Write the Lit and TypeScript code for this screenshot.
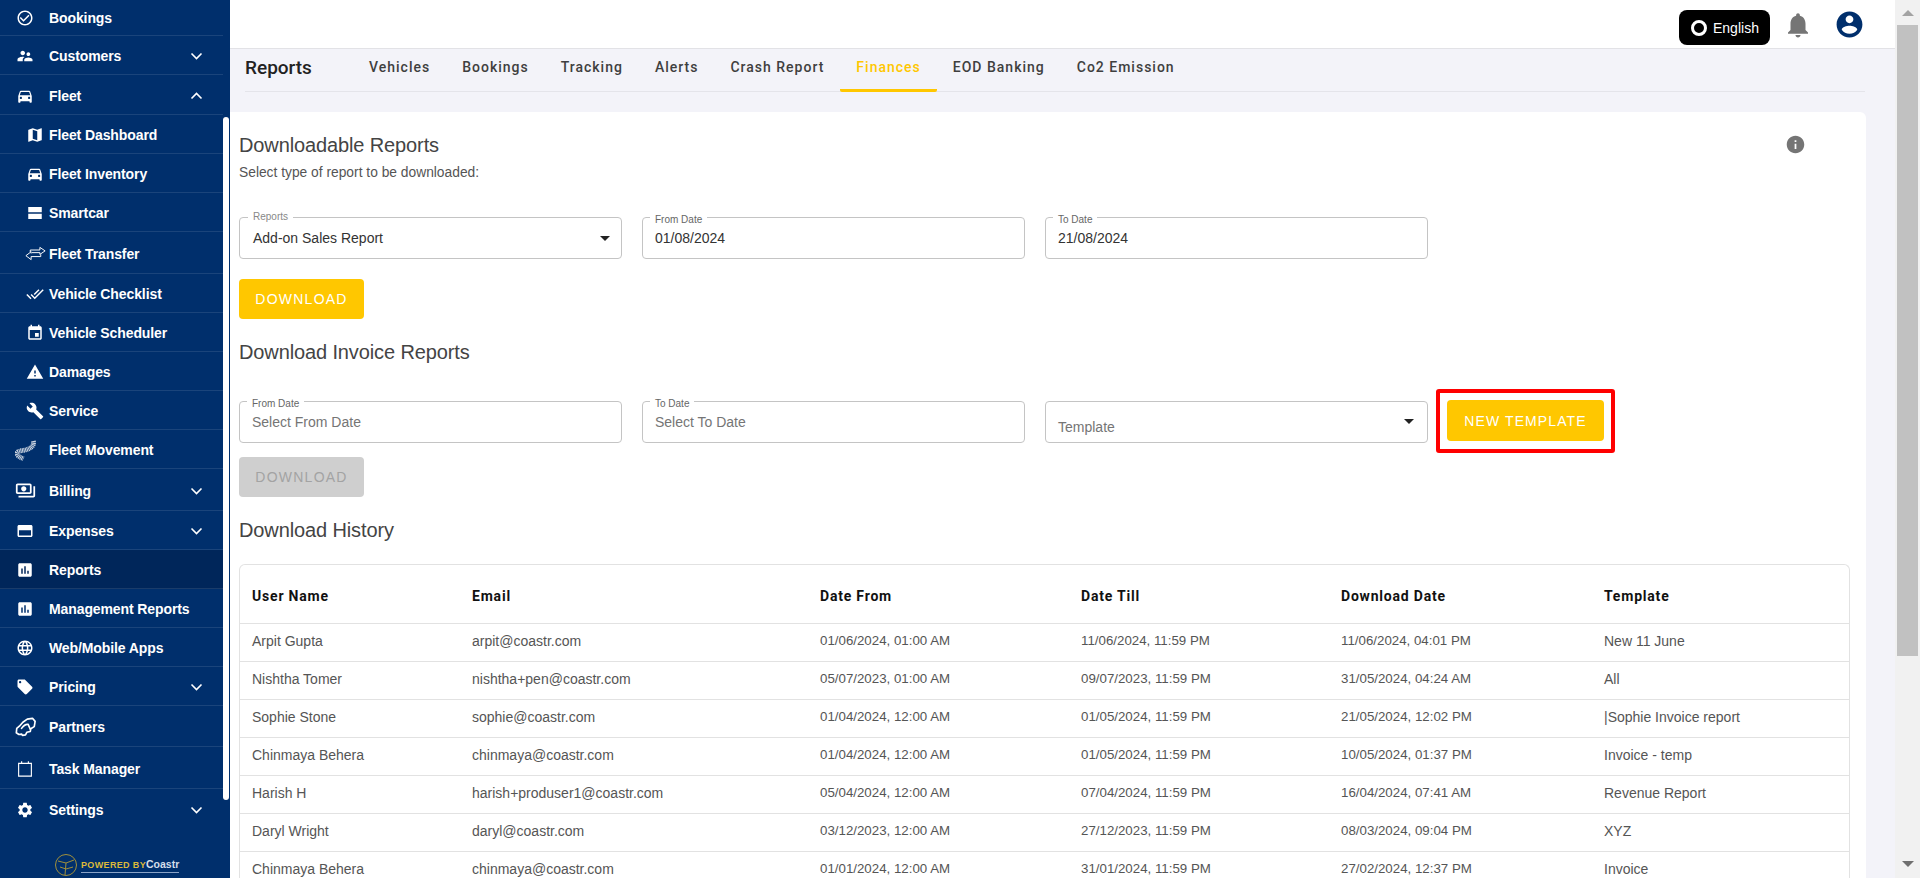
import { LitElement, html, css, svg } from 'lit';
import { customElement } from 'lit/decorators.js';

// material icons, 24 unit box
const p = (d: string) => html`<svg viewBox="0 0 24 24" fill="currentColor"><path d=${d}></path></svg>`;

const icons: Record<string, unknown> = {
  check: p('M16.59 7.58L10 14.17l-3.59-3.58L5 12l5 5 8-8zM12 2C6.48 2 2 6.48 2 12s4.48 10 10 10 10-4.48 10-10S17.52 2 12 2zm0 18c-4.42 0-8-3.58-8-8s3.58-8 8-8 8 3.58 8 8-3.58 8-8 8z'),
  people: p('M16.5 12c1.38 0 2.49-1.12 2.49-2.5S17.88 7 16.5 7C15.12 7 14 8.12 14 9.5s1.12 2.5 2.5 2.5zM9 11c1.66 0 2.99-1.34 2.99-3S10.66 5 9 5C7.34 5 6 6.34 6 8s1.34 3 3 3zm7.5 3c-1.83 0-5.500.92-5.500 2.750V19h11v-2.250c0-1.830-3.670-2.750-5.500-2.750zM9 13c-2.330 0-7 1.170-7 3.500V19h7v-2.250c0-.85.330-2.340 2.370-3.470C10.500 13.100 9.660 13 9 13z'),
  car: p('M18.92 6.01C18.72 5.42 18.16 5 17.5 5h-11c-.66 0-1.21.42-1.42 1.01L3 12v8c0 .55.45 1 1 1h1c.55 0 1-.45 1-1v-1h12v1c0 .55.45 1 1 1h1c.55 0 1-.45 1-1v-8l-2.08-5.99zM6.5 16c-.83 0-1.5-.67-1.5-1.5S5.67 13 6.5 13s1.5.67 1.5 1.5S7.33 16 6.5 16zm11 0c-.83 0-1.5-.67-1.5-1.5s.67-1.5 1.5-1.5 1.5.67 1.5 1.5-.67 1.5-1.5 1.5zM5 11l1.5-4.5h11L19 11H5z'),
  map: p('M20.5 3l-.16.03L15 5.1 9 3 3.36 4.9c-.21.07-.36.25-.36.48V20.5c0 .28.22.5.5.5l.16-.03L9 18.9l6 2.1 5.64-1.9c.21-.07.36-.25.36-.48V3.5c0-.28-.22-.5-.5-.5zM15 19l-6-2.11V5l6 2.11V19z'),
  bars: p('M3 4h18v7H3zM3 13h18v7H3z'),
  transfer: html`<svg viewBox="0 0 24 24" fill="none" stroke="currentColor" stroke-width="1.1"><path d="M6 10.500V8h11V5l6 4-6 4v-2H8"></path><path d="M18 13v2.500H7V19l-6-4.500 6-4.500v2"></path></svg>`,
  doneall: p('M18 7l-1.41-1.41-6.34 6.34 1.41 1.41L18 7zm4.24-1.41L11.66 16.17 7.48 12l-1.41 1.41L11.66 19l12-12-1.42-1.41zM.41 13.41L6 19l1.41-1.41L1.83 12 .41 13.41z'),
  event: p('M17 12h-5v5h5v-5zM16 1v2H8V1H6v2H5c-1.11 0-1.99.9-1.99 2L3 19c0 1.1.89 2 2 2h14c1.1 0 2-.9 2-2V5c0-1.1-.9-2-2-2h-1V1h-2zm3 18H5V8h14v11z'),
  warning: p('M1 21h22L12 2 1 21zm12-3h-2v-2h2v2zm0-4h-2v-4h2v4z'),
  build: p('M22.7 19l-9.1-9.1c.9-2.3.4-5-1.5-6.9-2-2-5-2.4-7.4-1.3L9 6 6 9 1.6 4.7C.4 7.1.9 10.1 2.9 12.1c1.9 1.9 4.6 2.4 6.9 1.5l9.1 9.1c.4.4 1 .4 1.4 0l2.3-2.3c.5-.4.5-1.1.1-1.4z'),
  road: html`<svg viewBox="0 0 20 20" fill="none" stroke="currentColor"><path d="M17.500 1C18.500 6 15 8 10 9.500 5 10.500 1 10.500 2 13.500 2.500 15.500 5 16.500 8 18" stroke-width="4.500" opacity=".8" stroke-dasharray="1 .5"></path></svg>`,
  billing: p('M19 14V6c0-1.1-.9-2-2-2H3c-1.1 0-2 .9-2 2v8c0 1.1.9 2 2 2h14c1.1 0 2-.9 2-2zm-2 0H3V6h14v8zm-7-7c-1.66 0-3 1.34-3 3s1.34 3 3 3 3-1.34 3-3-1.34-3-3-3zm13 0v11c0 1.1-.9 2-2 2H4v-2h17V7h2z'),
  card: p('M20 4H4c-1.11 0-1.990.89-1.990 2L2 18c0 1.110.89 2 2 2h16c1.110 0 2-.89 2-2V6c0-1.110-.89-2-2-2zm0 14H4v-7h16v7z'),
  chart: p('M19 3H5c-1.1 0-2 .9-2 2v14c0 1.1.9 2 2 2h14c1.1 0 2-.9 2-2V5c0-1.1-.9-2-2-2zM9 17H7v-7h2v7zm4 0h-2V7h2v10zm4 0h-2v-4h2v4z'),
  globe: p('M11.99 2C6.47 2 2 6.48 2 12s4.47 10 9.99 10C17.52 22 22 17.52 22 12S17.52 2 11.99 2zm6.93 6h-2.95c-.32-1.25-.78-2.45-1.38-3.56 1.84.63 3.37 1.91 4.33 3.56zM12 4.04c.83 1.2 1.48 2.53 1.91 3.96h-3.82c.43-1.43 1.08-2.76 1.91-3.96zM4.26 14C4.1 13.36 4 12.69 4 12s.1-1.36.26-2h3.38c-.08.66-.14 1.32-.14 2 0 .68.06 1.34.14 2H4.26zm.82 2h2.95c.32 1.25.78 2.45 1.38 3.56-1.84-.63-3.37-1.9-4.33-3.56zm2.95-8H5.08c.96-1.66 2.49-2.93 4.33-3.56C8.81 5.55 8.35 6.75 8.03 8zM12 19.96c-.83-1.2-1.48-2.53-1.91-3.96h3.82c-.43 1.43-1.08 2.76-1.91 3.96zM14.34 14H9.66c-.09-.66-.16-1.32-.16-2 0-.68.07-1.35.16-2h4.68c.09.65.16 1.32.16 2 0 .68-.07 1.34-.16 2zm.25 5.56c.6-1.11 1.06-2.31 1.38-3.56h2.95c-.96 1.65-2.49 2.93-4.33 3.56zM16.36 14c.08-.66.14-1.32.14-2 0-.68-.06-1.34-.14-2h3.38c.16.64.26 1.31.26 2s-.1 1.36-.26 2h-3.38z'),
  tag: p('M21.41 11.58l-9-9C12.05 2.22 11.55 2 11 2H4c-1.1 0-2 .9-2 2v7c0 .55.22 1.05.59 1.42l9 9c.36.36.86.58 1.41.58.55 0 1.05-.22 1.41-.59l7-7c.37-.36.59-.86.59-1.41 0-.55-.23-1.06-.59-1.42zM5.5 7C4.67 7 4 6.33 4 5.5S4.67 4 5.5 4 7 4.67 7 5.5 6.33 7 5.5 7z'),
  handshake: html`<svg viewBox="0 0 24 24" fill="none" stroke="currentColor" stroke-width="1.900" stroke-linejoin="round" stroke-linecap="round"><path d="M9 6l5-3.500 6-1 3 3.500-1 6-4 2.500-.5 3-4 1-1.500 3-3.500.5-1-1.500-3 .5L1.500 18 2 13l3-2.500z"></path><path d="M7.500 13C10 9.500 12.500 8 15 8.500l2.500 5.500"></path></svg>`,
  calendar: html`<svg viewBox="0 0 24 24" fill="none" stroke="currentColor" stroke-width="1.500"><path d="M3.500 4.500h17v17h-17z"></path><path d="M7.500 1.500v3M16.500 1.500v3"></path></svg>`,
  gear: p('M19.14 12.94c.04-.3.06-.61.06-.94 0-.32-.02-.64-.07-.94l2.03-1.58c.18-.14.23-.41.12-.61l-1.92-3.32c-.12-.22-.37-.29-.59-.22l-2.39.96c-.5-.38-1.03-.7-1.62-.94l-.36-2.54c-.04-.24-.24-.41-.48-.41h-3.84c-.24 0-.43.17-.47.41l-.36 2.54c-.59.24-1.13.57-1.62.94l-2.39-.96c-.22-.08-.47 0-.59.22L2.74 8.87c-.12.21-.08.47.12.61l2.03 1.58c-.05.3-.09.63-.09.94s.02.64.07.94l-2.03 1.58c-.18.14-.23.41-.12.61l1.92 3.32c.12.22.37.29.59.22l2.39-.96c.5.38 1.03.7 1.62.94l.36 2.54c.05.24.24.41.48.41h3.84c.24 0 .44-.17.47-.41l.36-2.54c.59-.24 1.13-.56 1.62-.94l2.39.96c.22.08.47 0 .59-.22l1.92-3.32c.12-.22.07-.47-.12-.61l-2.01-1.58zM12 15.6c-1.98 0-3.6-1.62-3.6-3.6s1.62-3.6 3.6-3.6 3.6 1.62 3.6 3.6-1.62 3.6-3.6 3.6z'),
  bell: p('M12 22c1.1 0 2-.9 2-2h-4c0 1.1.89 2 2 2zm6-6v-5c0-3.07-1.64-5.64-4.5-6.320V4c0-.83-.67-1.5-1.5-1.5s-1.5.67-1.5 1.5v.68C7.630 5.360 6 7.920 6 11v5l-2 2v1h16v-1l-2-2z'),
  account: p('M12 2C6.480 2 2 6.480 2 12s4.480 10 10 10 10-4.480 10-10S17.520 2 12 2zm0 3c1.660 0 3 1.340 3 3s-1.340 3-3 3-3-1.340-3-3 1.340-3 3-3zm0 14.200c-2.500 0-4.710-1.280-6-3.220.030-1.990 4-3.080 6-3.080 1.990 0 5.970 1.090 6 3.080-1.290 1.940-3.500 3.220-6 3.220z'),
  info: p('M12 2C6.480 2 2 6.480 2 12s4.480 10 10 10 10-4.480 10-10S17.520 2 12 2zm1 15h-2v-6h2v6zm0-8h-2V7h2v2z'),
};

interface NavItem { label: string; icon: string; h: number; sub?: boolean; big?: boolean; chev?: 'down' | 'up'; active?: boolean }

const nav: NavItem[] = [
  { label: 'Bookings', icon: 'check', h: 36 },
  { label: 'Customers', icon: 'people', h: 39, chev: 'down' },
  { label: 'Fleet', icon: 'car', h: 40, chev: 'up' },
  { label: 'Fleet Dashboard', icon: 'map', h: 39, sub: true },
  { label: 'Fleet Inventory', icon: 'car', h: 39, sub: true },
  { label: 'Smartcar', icon: 'bars', h: 39, sub: true },
  { label: 'Fleet Transfer', icon: 'transfer', h: 42, sub: true, big: true },
  { label: 'Vehicle Checklist', icon: 'doneall', h: 39, sub: true },
  { label: 'Vehicle Scheduler', icon: 'event', h: 39, sub: true },
  { label: 'Damages', icon: 'warning', h: 39, sub: true },
  { label: 'Service', icon: 'build', h: 39, sub: true },
  { label: 'Fleet Movement', icon: 'road', h: 39, big: true },
  { label: 'Billing', icon: 'billing', h: 42, big: true, chev: 'down' },
  { label: 'Expenses', icon: 'card', h: 39, chev: 'down' },
  { label: 'Reports', icon: 'chart', h: 39, active: true },
  { label: 'Management Reports', icon: 'chart', h: 39 },
  { label: 'Web/Mobile Apps', icon: 'globe', h: 39 },
  { label: 'Pricing', icon: 'tag', h: 39, chev: 'down' },
  { label: 'Partners', icon: 'handshake', h: 41, big: true },
  { label: 'Task Manager', icon: 'calendar', h: 42 },
  { label: 'Settings', icon: 'gear', h: 39, chev: 'down' },
];

const tabs = ['Vehicles', 'Bookings', 'Tracking', 'Alerts', 'Crash Report', 'Finances', 'EOD Banking', 'Co2 Emission'];

const history = [
  ['Arpit Gupta', 'arpit@coastr.com', '01/06/2024, 01:00 AM', '11/06/2024, 11:59 PM', '11/06/2024, 04:01 PM', 'New 11 June'],
  ['Nishtha Tomer', 'nishtha+pen@coastr.com', '05/07/2023, 01:00 AM', '09/07/2023, 11:59 PM', '31/05/2024, 04:24 AM', 'All'],
  ['Sophie Stone', 'sophie@coastr.com', '01/04/2024, 12:00 AM', '01/05/2024, 11:59 PM', '21/05/2024, 12:02 PM', '|Sophie Invoice report'],
  ['Chinmaya Behera', 'chinmaya@coastr.com', '01/04/2024, 12:00 AM', '01/05/2024, 11:59 PM', '10/05/2024, 01:37 PM', 'Invoice - temp'],
  ['Harish H', 'harish+produser1@coastr.com', '05/04/2024, 12:00 AM', '07/04/2024, 11:59 PM', '16/04/2024, 07:41 AM', 'Revenue Report'],
  ['Daryl Wright', 'daryl@coastr.com', '03/12/2023, 12:00 AM', '27/12/2023, 11:59 PM', '08/03/2024, 09:04 PM', 'XYZ'],
  ['Chinmaya Behera', 'chinmaya@coastr.com', '01/01/2024, 12:00 AM', '31/01/2024, 11:59 PM', '27/02/2024, 12:37 PM', 'Invoice'],
];

@customElement('app-root')
export class AppRoot extends LitElement {
  static styles = css`
    :host { display: block; height: 878px; overflow: hidden; font-family: "Liberation Sans", Arial, sans-serif; color: #333; }
    .app { display: grid; grid-template-columns: 230px 1fr 25px; height: 878px; background: #f3f3f9; }

    .side { position: relative; background: #002f6c; color: #fff; overflow: hidden; }
    .nav { width: 223px; }
    .row { display: flex; align-items: center; box-sizing: border-box; padding-top: 2px; border-bottom: 1px solid rgba(255,255,255,.1); font-size: 14px; font-weight: 700; letter-spacing: -.1px; }
    .row:first-child { padding-top: 0; }
    .row:last-child { border-bottom: none; }
    .row.active { background: #00265a; }
    .slot { flex: none; width: 49px; box-sizing: border-box; padding-left: 16px; display: flex; align-items: center; }
    .slot svg { width: 18px; height: 18px; display: block; }
    .sub .slot { padding-left: 26px; }
    .slot.big svg { width: 21px; height: 21px; margin-left: -1px; flex: none; }
    .chev { margin-left: auto; margin-right: 20px; width: 13px; height: 8px; display: block; }
    .thumb { position: absolute; left: 223px; top: 117px; width: 6px; height: 683px; background: #fff; border-radius: 3px; }
    .logo { position: absolute; left: 54px; top: 853px; display: flex; align-items: center; gap: 3px; }
    .logo svg { width: 24px; height: 24px; display: block; }
    .logo-text { font-size: 9px; font-weight: 700; letter-spacing: .35px; color: #dcb93a; border-bottom: 1px solid #8aa3c7; padding-bottom: 2px; white-space: nowrap; }
    .logo-text b { color: #d5deea; font-size: 10.500px; letter-spacing: 0; }

    .main { min-width: 0; overflow: hidden; }
    .top { height: 48px; background: #fff; border-bottom: 1px solid #e2e2e6; display: flex; align-items: center; justify-content: flex-end; padding-right: 30px; }
    .lang { width: 91px; height: 35px; margin-top: 7px; box-sizing: border-box; background: #000; color: #fff; border-radius: 8px; display: flex; align-items: center; gap: 6px; padding-left: 12px; font-size: 14px; }
    .ring { width: 10px; height: 10px; border: 3px solid #fff; border-radius: 50%; flex: none; }
    .bell { width: 30px; height: 30px; color: #757575; margin-left: 13px; margin-top: 2px; }
    .avatar { width: 31px; height: 31px; color: #002f6c; margin-left: 21px; }
    .bell svg, .avatar svg { display: block; width: 100%; height: 100%; }

    .subhead { height: 43px; margin: 0 30px 20px 15px; box-sizing: border-box; border-bottom: 1px solid #e4e4ea; display: flex; }
    .title { width: 108px; font-size: 19px; font-weight: 500; font-family: Roboto, sans-serif; color: #222; line-height: 37px; }
    .tab { padding: 0 16px; box-sizing: border-box; height: 43px; font-family: Roboto, sans-serif; font-size: 14px; font-weight: 500; letter-spacing: 1px; color: #3f3f3f; line-height: 36px; border-bottom: 3px solid transparent; white-space: nowrap; }
    .tab.on { color: #ffc700; border-bottom-color: #ffc700; border-radius: 0 0 2px 2px; }

    .card { position: relative; width: 1636px; box-sizing: border-box; background: #fff; border-radius: 0 6px 0 0; padding: 21px 15px 0 9px; }
    .info { position: absolute; left: 1555px; top: 22px; width: 21px; height: 21px; color: #757575; }
    .info svg { display: block; width: 100%; height: 100%; }
    h2 { margin: 0; font-size: 20px; line-height: 24px; font-weight: 400; color: #444; letter-spacing: -.12px; }
    .hint { margin-top: 8px; font-size: 13.800px; line-height: 16px; color: #555; }
    .fields { display: flex; gap: 20px; margin-top: 36px; }
    .fields.second { margin-top: 37px; }
    .field { position: relative; width: 383px; height: 42px; box-sizing: border-box; border: 1px solid #c4c4c4; border-radius: 4px; display: flex; align-items: center; padding-left: 12px; font-size: 14px; color: #333; flex: none; }
    .field.sel { padding-left: 13px; }
    .field.muted { color: #757575; }
    .field .tmpl { padding-top: 10px; color: #757575; }
    .legend { position: absolute; left: 7px; top: -3px; padding: 0 5px; background: #fff; font-size: 10px; line-height: 10px; color: #666; white-space: nowrap; }
    .legend.up { left: 8px; top: -6px; color: #888; }
    .arrow { position: absolute; right: 11px; top: 18px; width: 0; height: 0; border-left: 5px solid transparent; border-right: 5px solid transparent; border-top: 5px solid #222; }
    .tmpl + .arrow { right: 13px; top: 17px; }
    .btn { display: flex; align-items: center; justify-content: center; width: 125px; height: 40px; border-radius: 4px; background: #ffc700; color: #fff; font-size: 14px; letter-spacing: 1.25px; white-space: nowrap; }
    .fields + .btn { margin-top: 20px; }
    .second + .btn { margin-top: 14px; }
    .btn.off { background: #cfcfcf; color: #a3a3a3; }
    .mark { position: relative; flex: none; margin-top: -1px; margin-left: -1px; }
    .mark .btn { width: 157px; height: 41px; letter-spacing: 1.1px; }
    .mark::after { content: ""; position: absolute; inset: -11px -11px -10px; border: 4px solid #f00; border-radius: 3px; }
    .h-a { margin-top: 21px; }
    .h-b { margin-top: 21px; }

    .table { margin-top: 22px; border: 1px solid #e2e2e2; border-bottom: none; border-radius: 6px 6px 0 0; width: 1611px; box-sizing: border-box; }
    .tr { display: grid; grid-template-columns: 220px 348px 261px 260px 263px 1fr; height: 38px; box-sizing: border-box; padding-bottom: 4px; align-items: center; border-top: 1px solid #e2e2e2; font-size: 14px; color: #555; }
    .tr > div:nth-child(3), .tr > div:nth-child(4), .tr > div:nth-child(5) { font-size: 13.300px; }
    .tr.head { height: 58px; border-top: none; padding: 3px 0 0; font-family: Roboto, sans-serif; font-weight: 700; letter-spacing: .8px; color: #111; }
    .tr.head > div { font-size: 14px; }
    .tr > div { padding-left: 12px; white-space: nowrap; }

    .sb { background: #f1f1f1; display: flex; flex-direction: column; align-items: center; }
    .sb-up { height: 25px; flex: none; display: flex; align-items: center; }
    .sb-up i { display: block; border-left: 6px solid transparent; border-right: 6px solid transparent; border-bottom: 6px solid #a3a3a3; }
    .sb-thumb { width: 21px; height: 631px; background: #c1c1c1; flex: none; }
    .sb-down { margin-top: auto; height: 17px; flex: none; display: flex; align-items: flex-start; }
    .sb-down i { display: block; border-left: 6px solid transparent; border-right: 6px solid transparent; border-top: 6px solid #6f6f6f; }
  `;

  private chevron(dir: 'down' | 'up') {
    const d = dir === 'down' ? 'M1.5 1.5L6.500 6.500 11.500 1.500' : 'M1.500 6.500L6.500 1.500 11.500 6.500';
    return html`<svg class="chev" viewBox="0 0 13 8" fill="none" stroke="#fff" stroke-width="1.6">${svg`<path d=${d}></path>`}</svg>`;
  }

  private renderRow(item: NavItem) {
    const cls = `row${item.sub ? ' sub' : ''}${item.active ? ' active' : ''}`;
    return html`<div class=${cls} style="height:${item.h}px">
      <span class="slot ${item.big ? 'big' : ''}">${icons[item.icon]}</span>
      <span>${item.label}</span>
      ${item.chev ? this.chevron(item.chev) : ''}
    </div>`;
  }

  private field(label: string, value: string, muted = false) {
    return html`<div class="field ${muted ? 'muted' : ''}">
      <span class="legend">${label}</span>
      ${value}
    </div>`;
  }

  render() {
    return html`
      <div class="app">
        <aside class="side">
          <div class="nav">${nav.map((n) => this.renderRow(n))}</div>
          <div class="thumb"></div>
          <div class="logo">
            <svg viewBox="0 0 24 24" fill="none" stroke="#a08f3c" stroke-width="1"><circle cx="12" cy="12" r="10.500"></circle><path d="M4 8l8 2 8-3M12 10l-1 12M6 14l6 2 7-2"></path></svg>
            <span class="logo-text">POWERED BY<b>Coastr</b></span>
          </div>
        </aside>

        <main class="main">
          <div class="top">
            <div class="lang"><span class="ring"></span>English</div>
            <div class="bell">${icons.bell}</div>
            <div class="avatar">${icons.account}</div>
          </div>
          <div class="subhead">
            <div class="title">Reports</div>
            ${tabs.map((t) => html`<div class="tab ${t === 'Finances' ? 'on' : ''}">${t}</div>`)}
          </div>
          <section class="card">
            <div class="info">${icons.info}</div>
            <h2>Downloadable Reports</h2>
            <div class="hint">Select type of report to be downloaded:</div>
            <div class="fields">
              <div class="field sel"><span class="legend up">Reports</span>Add-on Sales Report<span class="arrow"></span></div>
              ${this.field('From Date', '01/08/2024')}
              ${this.field('To Date', '21/08/2024')}
            </div>
            <div class="btn">DOWNLOAD</div>
            <h2 class="h-a">Download Invoice Reports</h2>
            <div class="fields second">
              ${this.field('From Date', 'Select From Date', true)}
              ${this.field('To Date', 'Select To Date', true)}
              <div class="field muted"><span class="tmpl">Template</span><span class="arrow"></span></div>
              <div class="mark"><div class="btn">NEW TEMPLATE</div></div>
            </div>
            <div class="btn off">DOWNLOAD</div>
            <h2 class="h-b">Download History</h2>
            <div class="table">
              <div class="tr head">
                <div>User Name</div><div>Email</div><div>Date From</div><div>Date Till</div><div>Download Date</div><div>Template</div>
              </div>
              ${history.map((r) => html`<div class="tr">${r.map((c) => html`<div>${c}</div>`)}</div>`)}
            </div>
          </section>
        </main>

        <div class="sb">
          <div class="sb-up"><i></i></div>
          <div class="sb-thumb"></div>
          <div class="sb-down"><i></i></div>
        </div>
      </div>
    `;
  }
}
